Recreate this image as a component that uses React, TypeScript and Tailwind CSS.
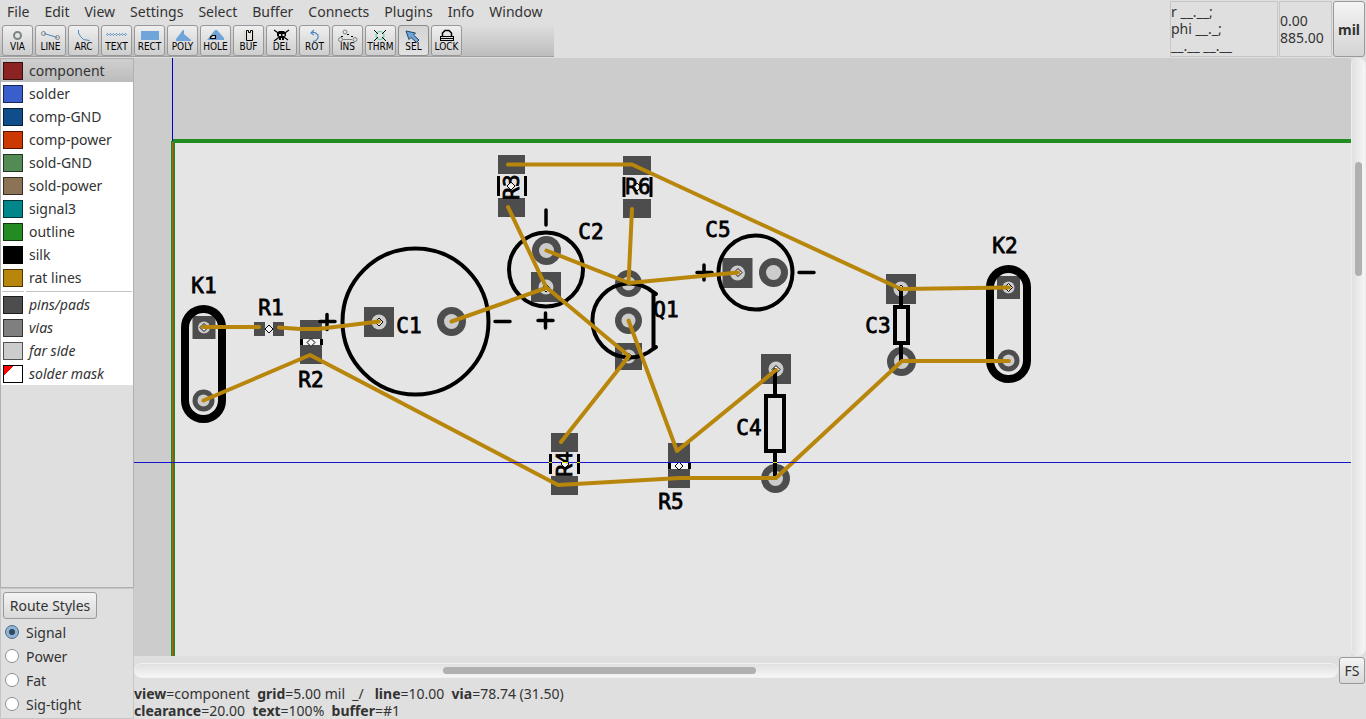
import { useState, type ReactNode } from 'react';

const menus = ['File', 'Edit', 'View', 'Settings', 'Select', 'Buffer', 'Connects', 'Plugins', 'Info', 'Window'];

const layers = [
  { name: 'component', color: 'bg-[#8b2323]' },
  { name: 'solder', color: 'bg-[#3a5fcd]' },
  { name: 'comp-GND', color: 'bg-[#104e8b]' },
  { name: 'comp-power', color: 'bg-[#cd3700]' },
  { name: 'sold-GND', color: 'bg-[#548b54]' },
  { name: 'sold-power', color: 'bg-[#8b7355]' },
  { name: 'signal3', color: 'bg-[#00868b]' },
  { name: 'outline', color: 'bg-[#228b22]' },
  { name: 'silk', color: 'bg-black' },
  { name: 'rat lines', color: 'bg-[#b8860b]' },
];

const extraLayers = [
  { name: 'pins/pads', color: 'bg-[#4d4d4d]' },
  { name: 'vias', color: 'bg-[#7f7f7f]' },
  { name: 'far side', color: 'bg-[#cccccc]' },
  { name: 'solder mask', color: 'border-black bg-[linear-gradient(135deg,#ff0000_28%,#ffffff_28%)]' },
];

const routeStyles = ['Signal', 'Power', 'Fat', 'Sig-tight'];

const BLUE = '#6fa5d8';
const LINE_BLUE = '#4a86c0';

const tools: { name: string; icon: ReactNode }[] = [
  { name: 'VIA', icon: <circle cx="12.5" cy="7.5" r="3.5" fill="none" stroke="#7c8480" strokeWidth="2" /> },
  {
    name: 'LINE',
    icon: (
      <g fill="none">
        <path d="M6 5.5L19.5 9.5" stroke={LINE_BLUE} />
        <circle cx="5.5" cy="5.5" r="2" stroke="#7c8480" />
        <circle cx="19.5" cy="9.5" r="2" stroke="#7c8480" />
      </g>
    ),
  },
  { name: 'ARC', icon: <path d="M7.5 2V5L9.5 8.5L12.5 11.5L18.5 12.5" fill="none" stroke={LINE_BLUE} /> },
  {
    name: 'TEXT',
    icon: (
      <g fill="none" stroke={LINE_BLUE}>
        {[3.5, 6.5, 9.5, 12.5, 15.5, 18.5, 21.5].map(x => (
          <path key={x} d={`M${x - 1} 6.5L${x} 5.5L${x + 1} 6.5L${x} 7.5Z`} />
        ))}
      </g>
    ),
  },
  { name: 'RECT', icon: <rect x="4" y="3" width="18" height="9" fill={BLUE} /> },
  { name: 'POLY', icon: <path d="M6 13V11L13 2H14V6L21 12V13Z" fill={BLUE} /> },
  {
    name: 'HOLE',
    icon: (
      <g>
        <path d="M4 12L12 2H14L21 10V12Z" fill={BLUE} />
        <path d="M7.5 10.5V9L9.5 7.5H12.5V10.5Z" fill="#ddd" stroke="#000" strokeWidth="1.2" />
      </g>
    ),
  },
  {
    name: 'BUF',
    icon: (
      <g fill="none">
        <path d="M8.5 3V13M17.5 3V13" stroke="#d8c890" strokeDasharray="1 1" />
        <path d="M10.5 2.5H12.5V4.5H14.5V2.5H16.5V12.5H10.5Z" stroke="#000" />
      </g>
    ),
  },
  {
    name: 'DEL',
    icon: (
      <g>
        <path d="M5 2L19 12M20 2L5 13" stroke="#000" strokeWidth="1.2" />
        <path d="M8 5L10 3H15L17 5V8L15 9V12H10V9L8 8Z" fill="#000" />
        <path d="M10 6H12V8H10ZM13.5 6H15.5V8H13.5ZM12 10H13V12H12Z" fill="#ddd" />
      </g>
    ),
  },
  {
    name: 'ROT',
    icon: <path d="M12 2L9 5L12 7M9.5 4.5H13L16 7V10L14 12.5L11 13.5" fill="none" stroke={LINE_BLUE} strokeWidth="1.2" />,
  },
  {
    name: 'INS',
    icon: (
      <g fill="none">
        <circle cx="5.5" cy="11.5" r="2" stroke="#7c8480" />
        <circle cx="20" cy="11.5" r="2" stroke="#7c8480" />
        <circle cx="10" cy="4" r="2" stroke="#7c8480" />
        <path d="M8 11.5H17" stroke="#7c8480" />
        <path d="M6 8.5H8M12 6.5H14M16 8.5H18" stroke="#000" />
      </g>
    ),
  },
  {
    name: 'THRM',
    icon: (
      <g fill="none">
        <circle cx="12" cy="7.5" r="4" stroke="#62d0a4" strokeWidth="1.2" />
        <path d="M6 2L10 6M18 2L14 6M6 13L10 9M18 13L14 9" stroke="#000" />
      </g>
    ),
  },
  {
    name: 'SEL',
    icon: <path d="M5 3L14.5 5L12.5 7L18 12L15.5 14.5L10 9.5L8 11.5Z" fill={BLUE} stroke="#23486b" />,
  },
  {
    name: 'LOCK',
    icon: (
      <g fill="none" stroke="#000">
        <path d="M8.5 8V5L11 2.5H15L17.5 5V8" strokeWidth="1.5" />
        <path d="M6 8.5H20M6 10.5H20M6 12.5H20M6.5 8V13M19.5 8V13" />
      </g>
    ),
  },
];

// centre x, centre y, width, height
const smdPads = [
  [259.5, 329, 11, 14], [278.5, 329, 11, 14],
  [311, 329.5, 22, 19], [311, 354.5, 22, 19],
  [511.5, 164.5, 27, 19], [511.5, 207.5, 27, 19],
  [637, 165.5, 28, 19], [637, 208.5, 28, 19],
  [564.5, 442.5, 27, 19], [564.5, 485.5, 27, 19],
  [679, 453, 22, 20], [679, 478.5, 22, 19],
];

// centre x, centre y, side, hole radius
const squarePins = [
  [204, 327.5, 23, 6], [379, 322, 30, 7.5], [546, 287, 30, 7.5], [628.5, 356.5, 27, 7],
  [737.5, 273, 30, 7.5], [901, 289, 30, 7.5], [776, 369, 30, 7.5], [1008.5, 287.5, 23, 6],
];

// centre x, centre y, outer radius, hole radius
const roundPins = [
  [203.5, 400.5, 11, 6], [451.5, 321.5, 14.5, 7.5], [546.5, 250.5, 14.5, 7.5],
  [628.5, 283.5, 13.5, 7], [628.5, 320.5, 13.5, 7], [773.5, 272.5, 14.5, 7.5],
  [901.5, 361.5, 14.5, 7.5], [775.5, 478.5, 14.5, 7.5], [1008.5, 360.5, 11, 6],
];

const origins = [
  [204, 327.5], [269, 329], [311, 342.5], [379, 322], [511, 186], [546, 288], [637, 187], [628.5, 357],
  [738, 272.5], [901, 289], [776, 369.5], [1008.5, 287.5], [565, 464], [679, 466],
];

const rats = [
  'M203 327H259',
  'M279 327.5L300 329H318L379 321.5',
  'M451.5 321.5L546 288',
  'M203.5 400.5L310 355L558 485L680 478H776L902 361H1009',
  'M508 164.5H632L901 289L1009 287.5',
  'M508 207L546 287L629 356L561 442',
  'M546.5 250.5L629 283L738 272.5',
  'M632 209L628.5 283',
  'M628.5 320.5L677 451L776 370',
];

const labels = [
  { t: 'K1', x: 204, y: 293 }, { t: 'R1', x: 271, y: 315 }, { t: 'R2', x: 311, y: 387 },
  { t: 'C1', x: 409, y: 333 }, { t: 'C2', x: 591, y: 239 }, { t: 'Q1', x: 666, y: 317 },
  { t: 'R6', x: 638, y: 194 }, { t: 'C5', x: 718, y: 237 }, { t: 'C3', x: 878, y: 333 },
  { t: 'C4', x: 749, y: 435 }, { t: 'R5', x: 671, y: 509 }, { t: 'K2', x: 1005, y: 253 },
];

function Board() {
  return (
    <svg className="block h-full w-full bg-[#cccccc]" role="img" aria-label="Board layout">
      <g transform="translate(-134 -58)">
        <rect x="174" y="142" width="4000" height="4000" fill="#e5e5e5" />
        <path d="M172.5 58V141" stroke="#0000cd" />
        <path d="M173 141H4000" stroke="#228b22" strokeWidth="4" />
        <path d="M173 141V4000" stroke="#228b22" strokeWidth="4" />
        <path d="M172.5 142V4000" stroke="#ff3a10" />

        {/* Pads and pins */}
        <path d="M300 339H322V345H300ZM668 463H690V469H668Z" fill="#f5f5f5" />
        <g fill="#4d4d4d">
          {smdPads.map(([x, y, w, h]) => (
            <rect key={`${x}-${y}`} x={x - w / 2} y={y - h / 2} width={w} height={h} />
          ))}
        </g>
        {squarePins.map(([x, y, s, r]) => (
          <g key={`${x}-${y}`}>
            <rect x={x - s / 2} y={y - s / 2} width={s} height={s} fill="#4d4d4d" />
            <circle cx={x} cy={y} r={r} fill="#cccccc" />
          </g>
        ))}
        {roundPins.map(([x, y, R, r]) => (
          <g key={`${x}-${y}`}>
            <circle cx={x} cy={y} r={R} fill="#4d4d4d" />
            <circle cx={x} cy={y} r={r} fill="#cccccc" />
          </g>
        ))}
        {origins.map(([x, y]) => (
          <path
            key={`${x}-${y}`}
            d={`M${x - 4} ${y}L${x} ${y - 4}L${x + 4} ${y}L${x} ${y + 4}Z`}
            fill="#f5f5f5"
            stroke="#000"
          />
        ))}

        {/* Silk */}
        <g fill="none" stroke="#000" strokeWidth="4" strokeLinecap="round">
          <rect x="185" y="309" width="37" height="110" rx="18.5" strokeWidth="8" />
          <rect x="990" y="269" width="37" height="110" rx="18.5" strokeWidth="8" />
          <circle cx="415.5" cy="321.5" r="73" />
          <circle cx="546" cy="269.5" r="37" />
          <circle cx="755.5" cy="272.5" r="37" />
          <path d="M656 294L653 292A37 37 0 1 0 653 349L656 347M653.5 293V348" />
          <rect x="895" y="307" width="13" height="36" />
          <path d="M901 290V306M901 344V361" />
          <rect x="766" y="396" width="18" height="55" />
          <path d="M775 370V395M775 452V476" />
          <g strokeWidth="3.5">
            <path d="M320 321.5H335M327 314.5V329.5M495 321.5H510" />
            <path d="M546 210V225M538 320.5H553M545.5 313V328" />
            <path d="M697 272.5H712M704 265V280M799 272.5H814" />
          </g>
          <g strokeWidth="3" strokeLinecap="butt">
            <path d="M498.5 176V196M525.5 176V196M624 177V197M651 177V197M550.5 454V474M578.5 454V474" />
            <path d="M301.5 339V345M321.5 339V345M669.5 463V469M689.5 463V469" />
          </g>
        </g>
        <g
          className="font-['DejaVu_Sans_Mono',monospace] text-[21px]"
          fill="#000"
          stroke="#000"
          strokeWidth="0.8"
          textAnchor="middle"
        >
          {labels.map(l => <text key={l.t} x={l.x} y={l.y}>{l.t}</text>)}
          <text transform="translate(519 187) rotate(-90)">R3</text>
          <text transform="translate(572 464) rotate(-90)">R4</text>
        </g>

        <g fill="none" stroke="#b8860b" strokeWidth="4" strokeLinecap="round" strokeLinejoin="round">
          {rats.map(d => <path key={d} d={d} />)}
        </g>

        <path d="M134 462.5H4000" stroke="#1414cd" />
        <path d="M549 462.5H552M562 462.5H568M577 462.5H580M773 462.5H777" stroke="#e6e600" />
      </g>
    </svg>
  );
}

function LayerRow({ name, color, active, italic, onClick }: {
  name: string;
  color: string;
  active?: boolean;
  italic?: boolean;
  onClick?: () => void;
}) {
  return (
    <button
      onClick={onClick}
      className={`flex h-[23px] w-full items-center gap-1.5 pl-0.5 text-left ${active ? 'bg-linear-to-b from-[#cfcfcf] to-[#bcbcbc]' : ''}`}
    >
      <span className={`h-[18px] w-5 shrink-0 border ${name === 'solder mask' ? '' : 'border-black/60'} ${color}`} />
      <span className={italic ? 'italic' : ''}>{name}</span>
    </button>
  );
}

export default function App() {
  const [layer, setLayer] = useState('component');
  const [tool, setTool] = useState('SEL');
  const [route, setRoute] = useState('Signal');

  return (
    <div className="flex h-screen w-full flex-col overflow-hidden bg-[#dfdfdf] font-['Noto_Sans',sans-serif] text-[14px] leading-[17px] text-[#333333]">
      <header className="flex h-[58px] shrink-0 items-start justify-between">
        <div>
          <nav className="flex h-6 items-center gap-px pb-0.5">
            {menus.map(m => (
              <button key={m} className="px-[7px]">{m}</button>
            ))}
          </nav>
          <div className="flex h-[33px] w-[554px] gap-0.5 border-b border-[#a0a0a0] bg-linear-to-b from-[#dfdfdf] to-[#bdbdbd] pt-px pl-0.5">
            {tools.map(t => (
              <button
                key={t.name}
                onClick={() => setTool(t.name)}
                className={`flex h-[31px] w-[31px] flex-col items-center rounded-[3px] border pt-0.5 ${
                  tool === t.name
                    ? 'border-[#8c8c8c] bg-linear-to-b from-[#d4d4d4] to-[#e2e2e2]'
                    : 'border-[#989898] bg-linear-to-b from-[#efefef] to-[#cecece]'
                }`}
              >
                <svg className="block h-[14px] w-[25px] shrink-0 overflow-visible" viewBox="0 0 25 14" aria-hidden="true">{t.icon}</svg>
                <span className="font-['Liberation_Sans_Narrow','DejaVu_Sans_Condensed',sans-serif] text-[10px] leading-[10px] text-black">{t.name}</span>
              </button>
            ))}
          </div>
        </div>
        <div className="flex h-[58px] gap-px pt-px pr-px pb-px">
          <div className="w-[108px] border border-[#c6c6c6] pt-px whitespace-pre">{'r __.__;\nphi __._;\n__.__ __.__'}</div>
          <div className="flex w-[53px] items-center border border-[#c6c6c6] whitespace-pre">{'0.00\n885.00'}</div>
          <button className="w-8 rounded-[3px] border border-[#999999] bg-linear-to-b from-[#f4f4f4] to-[#d4d4d4] font-bold">mil</button>
        </div>
      </header>

      <div className="flex min-h-0 flex-1">
        <aside className="flex w-[134px] shrink-0 flex-col">
          <div className="flex-1 border border-[#b0b0b0]">
            <div className="bg-white">
              {layers.map(l => (
                <LayerRow key={l.name} {...l} active={l.name === layer} onClick={() => setLayer(l.name)} />
              ))}
              <div className="flex h-1 gap-0.5 px-px pt-0.5">
                <div className="h-px w-[22px] bg-[#c4c4c4]" />
                <div className="h-px flex-1 bg-[#c4c4c4]" />
              </div>
              {extraLayers.map(l => (
                <LayerRow key={l.name} {...l} italic />
              ))}
            </div>
          </div>
          <div className="flex flex-col border border-[#c6c6c6] px-0.5 pt-[3px] pb-0.5">
            <button className="mb-px h-[27px] w-[94px] rounded-[3px] border border-[#999999] bg-linear-to-b from-[#f4f4f4] to-[#d9d9d9]">
              Route Styles
            </button>
            {routeStyles.map(r => (
              <label key={r} className="flex h-6 items-center gap-[7px] pl-0.5">
                <input
                  type="radio"
                  name="route-style"
                  checked={route === r}
                  onChange={() => setRoute(r)}
                  className="h-[14px] w-[14px] appearance-none rounded-full border border-[#8f8f8f] bg-white checked:border-[#4d6b85] checked:bg-[radial-gradient(circle,#334b60_32%,#8fb4d6_40%)]"
                />
                {r}
              </label>
            ))}
          </div>
        </aside>

        <main className="flex min-w-0 flex-1 flex-col">
          <div className="flex min-h-0 flex-1">
            <div className="min-w-0 flex-1 overflow-hidden">
              <Board />
            </div>
            <div className="flex w-[15px] shrink-0 flex-col items-center rounded-full border border-[#eeeeee] bg-linear-to-r from-[#e0e0e0] to-[#f6f6f6]">
              <div className="flex-[103]" />
              <div className="w-[7px] flex-[114] rounded-full bg-[#b0b0b0]" />
              <div className="flex-[379]" />
            </div>
          </div>
          <div className="flex h-[29px] shrink-0 items-center gap-px pr-px">
            <div className="flex h-[15px] flex-1 items-center rounded-full border border-[#f2f2f2] bg-linear-to-b from-[#e0e0e0] to-[#f6f6f6]">
              <div className="flex-[308]" />
              <div className="h-[7px] flex-[313] rounded-full bg-[#b0b0b0]" />
              <div className="flex-[581]" />
            </div>
            <button className="h-[27px] w-[26px] rounded-[3px] border border-[#999999] bg-linear-to-b from-[#f4f4f4] to-[#d9d9d9]">FS</button>
          </div>
          <div className="h-[34px] shrink-0 whitespace-pre">
            <p><b>view</b>=component  <b>grid</b>=5.00 mil  _/   <b>line</b>=10.00  <b>via</b>=78.74 (31.50)</p>
            <p><b>clearance</b>=20.00  <b>text</b>=100%  <b>buffer</b>=#1</p>
          </div>
        </main>
      </div>
    </div>
  );
}
